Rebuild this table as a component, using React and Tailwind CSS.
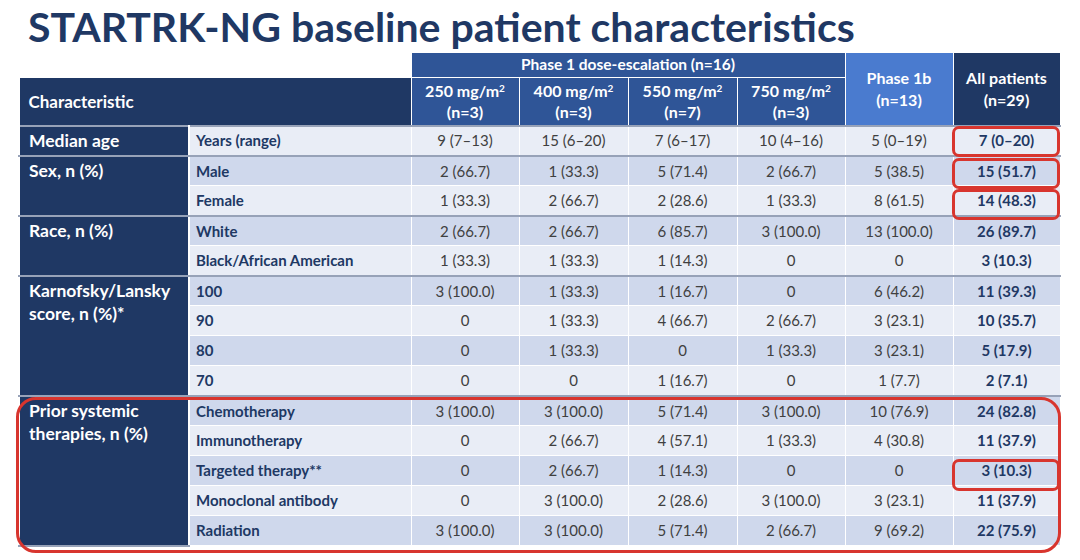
const groups = [
  { label: 'Median age', rows: [['Years (range)', '9 (7–13)', '15 (6–20)', '7 (6–17)', '10 (4–16)', '5 (0–19)', '7 (0–20)']] },
  {
    label: 'Sex, n (%)',
    rows: [
      ['Male', '2 (66.7)', '1 (33.3)', '5 (71.4)', '2 (66.7)', '5 (38.5)', '15 (51.7)'],
      ['Female', '1 (33.3)', '2 (66.7)', '2 (28.6)', '1 (33.3)', '8 (61.5)', '14 (48.3)'],
    ],
  },
  {
    label: 'Race, n (%)',
    rows: [
      ['White', '2 (66.7)', '2 (66.7)', '6 (85.7)', '3 (100.0)', '13 (100.0)', '26 (89.7)'],
      ['Black/African American', '1 (33.3)', '1 (33.3)', '1 (14.3)', '0', '0', '3 (10.3)'],
    ],
  },
  {
    label: 'Karnofsky/Lansky score, n (%)*',
    rows: [
      ['100', '3 (100.0)', '1 (33.3)', '1 (16.7)', '0', '6 (46.2)', '11 (39.3)'],
      ['90', '0', '1 (33.3)', '4 (66.7)', '2 (66.7)', '3 (23.1)', '10 (35.7)'],
      ['80', '0', '1 (33.3)', '0', '1 (33.3)', '3 (23.1)', '5 (17.9)'],
      ['70', '0', '0', '1 (16.7)', '0', '1 (7.7)', '2 (7.1)'],
    ],
  },
  {
    label: 'Prior systemic therapies, n (%)',
    rows: [
      ['Chemotherapy', '3 (100.0)', '3 (100.0)', '5 (71.4)', '3 (100.0)', '10 (76.9)', '24 (82.8)'],
      ['Immunotherapy', '0', '2 (66.7)', '4 (57.1)', '1 (33.3)', '4 (30.8)', '11 (37.9)'],
      ['Targeted therapy**', '0', '2 (66.7)', '1 (14.3)', '0', '0', '3 (10.3)'],
      ['Monoclonal antibody', '0', '3 (100.0)', '2 (28.6)', '3 (100.0)', '3 (23.1)', '11 (37.9)'],
      ['Radiation', '3 (100.0)', '3 (100.0)', '5 (71.4)', '2 (66.7)', '9 (69.2)', '22 (75.9)'],
    ],
  },
]

const doses = [
  ['250', 3],
  ['400', 3],
  ['550', 7],
  ['750', 3],
]

// red highlight boxes, in page pixels
function Highlight({ className }) {
  return <div className={`pointer-events-none absolute border-[3px] border-[#d8352e] ${className}`} />
}

export default function App() {
  let rowIndex = 0

  return (
    <div
      className="relative h-[560px] w-[1080px] overflow-hidden bg-white"
      style={{ fontFamily: 'Lato, "Open Sans", sans-serif' }}
    >
      <h1 className="h-[52px] pl-[28px] pt-[5px] text-[41px] font-bold leading-[44px] text-[#1f3864]">
        STARTRK-NG baseline patient characteristics
      </h1>

      <table className="ml-[18px] table-fixed border-collapse text-[15px]">
        <colgroup>
          <col className="w-[170px]" />
          <col className="w-[222px]" />
          <col className="w-[108px]" />
          <col className="w-[109px]" />
          <col className="w-[109px]" />
          <col className="w-[108px]" />
          <col className="w-[108px]" />
          <col className="w-[107px]" />
        </colgroup>
        <thead>
          <tr className="h-[25px]">
            <th colSpan={2} className="p-0" />
            <th colSpan={4} className="border border-white bg-[#2f5597] p-0 text-[15.5px] font-bold text-white">
              Phase 1 dose-escalation (n=16)
            </th>
            <th rowSpan={2} className="border border-white bg-[#4a7bcf] p-0 text-[16px] font-bold leading-[22px] text-white">
              Phase 1b
              <br />
              (n=13)
            </th>
            <th rowSpan={2} className="border border-white bg-[#1f3864] p-0 text-[16px] font-bold leading-[22px] text-white">
              All patients
              <br />
              (n=29)
            </th>
          </tr>
          <tr className="h-[48px]">
            <th colSpan={2} className="border border-white bg-[#1f3864] pl-[9px] text-left text-[17px] font-bold text-white">
              Characteristic
            </th>
            {doses.map(([d, n]) => (
              <th key={d} className="border border-white bg-[#2f5597] p-0 text-[16px] font-bold leading-[21px] text-white">
                {d} mg/m<sup className="text-[10px]">2</sup>
                <br />
                (n={n})
              </th>
            ))}
          </tr>
        </thead>
        <tbody>
          {groups.map((g) =>
            g.rows.map((r, j) => {
              const shade = rowIndex++ % 2 === 0 ? 'bg-[#e9edf6]' : 'bg-[#cfd8ec]'
              const first = j === 0 ? 'border-t-2 border-t-[#97a2b8]' : ''
              return (
                <tr key={r[0]} className="h-[30px]">
                  {j === 0 && (
                    <td
                      rowSpan={g.rows.length}
                      className="border-2 border-t-[#97a2b8] border-x-white border-b-[#97a2b8] bg-[#1f3864] px-[9px] pt-[2px] align-top text-[17.5px] font-bold leading-[23px] text-white"
                    >
                      {g.label}
                    </td>
                  )}
                  <td className={`border border-white ${first} ${shade} px-[6px] py-0 text-[15px] font-bold text-[#203864]`}>
                    {r[0]}
                  </td>
                  {r.slice(1, 6).map((v, k) => (
                    <td key={k} className={`border border-white ${first} ${shade} p-0 text-center text-[#404040]`}>
                      {v}
                    </td>
                  ))}
                  <td className={`border border-white ${first} ${shade} p-0 text-center text-[15px] font-bold text-[#1f3864]`}>
                    {r[6]}
                  </td>
                </tr>
              )
            })
          )}
        </tbody>
      </table>

      <Highlight className="left-[952px] top-[126px] h-[31px] w-[108px] rounded-[7px]" />
      <Highlight className="left-[952px] top-[158px] h-[31px] w-[108px] rounded-[7px]" />
      <Highlight className="left-[952px] top-[189px] h-[31px] w-[108px] rounded-[7px]" />
      <Highlight className="left-[952px] top-[459px] h-[32px] w-[108px] rounded-[7px]" />
      <Highlight className="left-[16px] top-[397px] h-[156px] w-[1045px] rounded-[20px]" />
    </div>
  )
}
